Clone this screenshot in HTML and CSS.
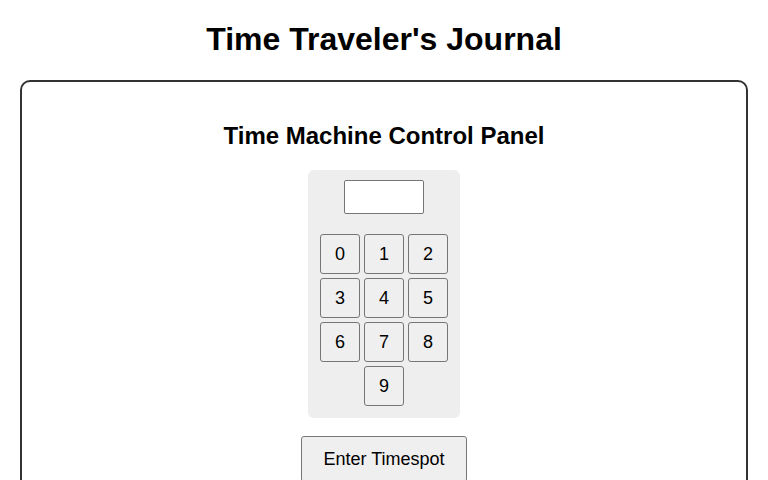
FILE: index.html
```html
<!DOCTYPE html>
<html>
<head>
<meta charset="utf-8">
<link rel="stylesheet" href="styles.css">
</head>
<body>
<h1 class="title">Time Traveler's Journal</h1>
<div class="panel">
  <h2 class="panel-title">Time Machine Control Panel</h2>
  <div class="keypad-wrap">
    <div class="keypad">
      <input class="display" type="text">
      <div class="keys">
        <button class="key">0</button>
        <button class="key">1</button>
        <button class="key">2</button>
        <button class="key">3</button>
        <button class="key">4</button>
        <button class="key">5</button>
        <button class="key">6</button>
        <button class="key">7</button>
        <button class="key">8</button>
        <button class="key">9</button>
      </div>
    </div>
  </div>
  <div class="actions">
    <button class="enter">Enter Timespot</button>
  </div>
</div>
</body>
</html>
```

FILE: styles.css
```css
html, body {
  background: #fff;
}
body {
  margin: 0;
  padding: 0 20px;
  font-family: "Liberation Sans", Arial, sans-serif;
  color: #000;
}
.title {
  font-size: 32px;
  font-weight: bold;
  text-align: center;
  margin: 21px 0 22px;
}
.panel {
  border: 2px solid #333;
  border-radius: 10px;
  padding: 20px;
}
.panel-title {
  font-size: 24px;
  font-weight: bold;
  text-align: center;
  margin: 20px 0 20px;
}
.keypad-wrap {
  display: flex;
  justify-content: center;
}
.keypad {
  background: #eee;
  border-radius: 6px;
  padding: 10px;
  width: 132px;
}
.display {
  display: block;
  box-sizing: border-box;
  width: 80px;
  height: 34px;
  margin: 0 auto 18px;
  border: 1px solid #767676;
  border-radius: 2px;
  background: #fff;
  padding: 0 4px;
  font-family: inherit;
  font-size: 16px;
}
.keys {
  display: flex;
  flex-wrap: wrap;
  justify-content: center;
}
.key {
  box-sizing: border-box;
  width: 40px;
  height: 40px;
  margin: 2px;
  padding: 0;
  border: 1px solid #767676;
  border-radius: 3px;
  background: #efefef;
  font-family: inherit;
  font-size: 18px;
  color: #000;
}
.actions {
  display: flex;
  justify-content: center;
  margin-top: 18px;
}
.enter {
  box-sizing: border-box;
  padding: 10px 21px;
  height: 46px;
  border: 1px solid #767676;
  border-radius: 3px;
  background: #efefef;
  font-family: inherit;
  font-size: 18px;
  color: #000;
}
```
